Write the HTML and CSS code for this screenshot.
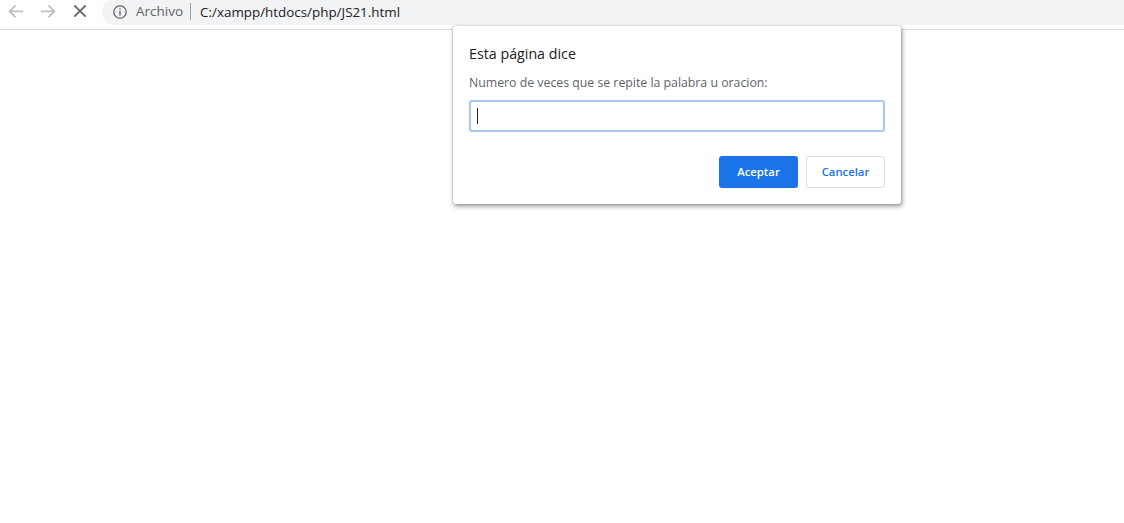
FILE: index.html
```html
<!DOCTYPE html>
<html lang="es">
<head>
<meta charset="utf-8">
<title>JS21</title>
<link rel="stylesheet" href="styles.css">
</head>
<body>
<header class="toolbar">
  <nav class="nav">
    <svg class="nav-icon" width="16" height="16" viewBox="0 0 16 16"><path d="M15 8.4H1.6M7.6 2.4 1.6 8.4 7.6 14.4" fill="none" stroke="#bdc1c6" stroke-width="1.8"/></svg>
    <svg class="nav-icon" width="16" height="16" viewBox="0 0 16 16"><path d="M1 8.4H14.4M8.4 2.4 14.4 8.4 8.4 14.4" fill="none" stroke="#bdc1c6" stroke-width="1.8"/></svg>
    <svg class="nav-icon" width="16" height="16" viewBox="0 0 16 16"><path d="M2.3 2.3 13.7 13.7M13.7 2.3 2.3 13.7" fill="none" stroke="#5f6368" stroke-width="1.8"/></svg>
  </nav>
  <div class="omnibox">
    <svg class="info" width="14" height="14" viewBox="0 0 14 14"><circle cx="7" cy="7" r="6.2" fill="none" stroke="#5f6368" stroke-width="1.3"/><path d="M6.3 3.4h1.4v1.4H6.3zM6.3 6h1.4v4.6H6.3z" fill="#5f6368"/></svg>
    <span class="scheme">Archivo</span>
    <span class="url">C:/xampp/htdocs/php/JS21.html</span>
  </div>
</header>
<div class="dialog">
  <h1 class="dialog-title">Esta página dice</h1>
  <p class="dialog-msg">Numero de veces que se repite la palabra u oracion:</p>
  <div class="field"><span class="caret"></span></div>
  <div class="actions">
    <button class="btn btn-primary">Aceptar</button>
    <button class="btn btn-secondary">Cancelar</button>
  </div>
</div>
</body>
</html>
```
FILE: styles.css
```css
* { box-sizing: border-box; }
html, body { margin: 0; height: 100%; background: #fff; overflow: hidden; }
body { font-family: "Open Sans", "Noto Sans", sans-serif; }
.toolbar {
  height: 30px;
  display: flex;
  align-items: flex-start;
  border-bottom: 1px solid #dadce0;
}
.nav {
  width: 102px;
  flex: none;
  display: flex;
  gap: 16px;
  padding: 3px 0 0 8px;
}
.omnibox {
  flex: 1;
  height: 26px;
  background: #f1f3f4;
  border-radius: 13px 0 0 13px;
  display: flex;
  align-items: center;
  padding: 0 0 1px 11px;
  margin-top: -1px;
}
.info { flex: none; }
.scheme {
  font-size: 13.5px;
  color: #5f6368;
  margin-left: 9px;
  padding-right: 7px;
  border-right: 1px solid #9aa0a6;
  line-height: 17px;
}
.url { font-size: 13.4px; color: #202124; margin-left: 9px; }
.dialog {
  position: absolute;
  left: 453px;
  top: 26px;
  width: 448px;
  height: 178px;
  background: #fff;
  border-radius: 2px;
  box-shadow: 0 0 1px rgba(0,0,0,.5), 1px 2px 5px rgba(0,0,0,.45);
  padding: 18px 16px 16px;
  display: flex;
  flex-direction: column;
}
.dialog-title { margin: 0; font-size: 14.25px; font-weight: 400; color: #202124; line-height: 20px; }
.dialog-msg { margin: 11px 0 0; font-size: 12.3px; color: #5f6368; line-height: 16px; }
.field {
  margin-top: 9px;
  height: 32px;
  border: 2px solid #a8c7f0;
  border-radius: 3px;
  display: flex;
  align-items: center;
  padding-left: 6px;
}
.caret { width: 1px; height: 16px; background: #202124; }
.actions { margin-top: 24px; display: flex; justify-content: flex-end; gap: 8px; }
.btn {
  height: 32px;
  border-radius: 3px;
  font-family: inherit;
  font-size: 11.3px;
  font-weight: 600;
  padding: 0 0 2px;
}
.btn-primary { width: 79px; background: #1a73e8; border: 0; color: #fff; }
.btn-secondary { width: 79px; background: #fff; border: 1px solid #dadce0; color: #1a73e8; }
```
